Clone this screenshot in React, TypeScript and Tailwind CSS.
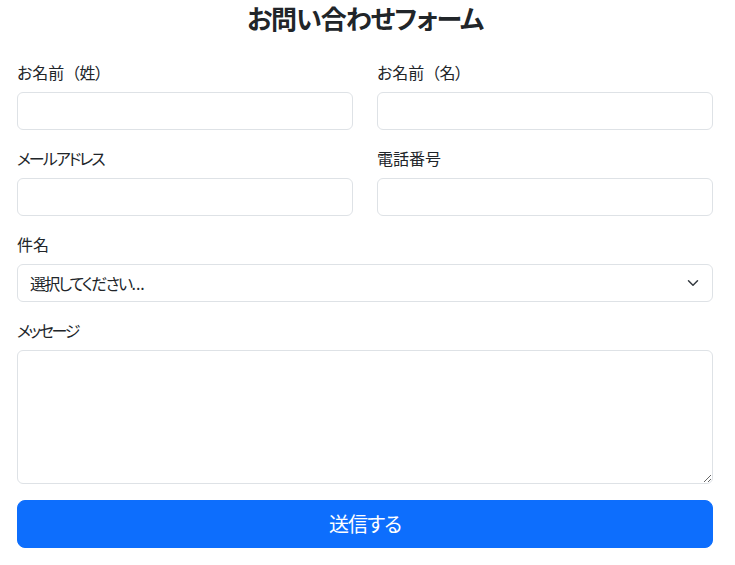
import React from "react";

const font = { fontFamily: '"Noto Sans CJK JP", "Noto Sans", sans-serif' };
const palt = { fontFeatureSettings: '"palt"' };

function Field({ label, children }: { label: React.ReactNode; children: React.ReactNode }) {
  return (
    <div className="mb-4 flex flex-col">
      <label className="mb-2 text-[16px] leading-[24px] text-[#212529]">{label}</label>
      {children}
    </div>
  );
}

function NameLabel({ inner }: { inner: string }) {
  return (
    <span>
      <span style={palt}>お名前</span>
      <span className="tracking-[-1px]">（{inner}）</span>
    </span>
  );
}

const inputCls =
  "block h-[38px] w-full rounded-[6px] border border-[#dee2e6] bg-white px-3 py-1.5 text-[16px] leading-[24px] text-[#212529] outline-none";

export default function App() {
  return (
    <div className="min-h-[565px] w-[735px] bg-white" style={font}>
      <div className="ml-[17px] w-[696px] pt-[2px]">
        <h2
          className="mb-[27px] text-center text-[26px] font-bold leading-[1.2] tracking-[-1px] text-[#212529]"
          style={palt}
        >
          お問い合わせフォーム
        </h2>
        <div className="grid grid-cols-2 gap-x-6">
          <Field label={<NameLabel inner="姓" />}>
            <input className={inputCls} type="text" />
          </Field>
          <Field label={<NameLabel inner="名" />}>
            <input className={inputCls} type="text" />
          </Field>
          <Field
            label={
              <span className="tracking-[-2px]" style={palt}>
                メールアドレス
              </span>
            }
          >
            <input className={inputCls} type="email" />
          </Field>
          <Field label="電話番号">
            <input className={inputCls} type="tel" />
          </Field>
        </div>
        <Field label="件名">
          <div className="relative">
            <div className={inputCls + " pr-10"}>
              <span className="tracking-[-1.8px]" style={palt}>
                選択してください
              </span>
              <span>...</span>
            </div>
            <svg
              className="pointer-events-none absolute right-[12px] top-[13px]"
              width="16"
              height="12"
              viewBox="0 0 16 16"
            >
              <path d="m2 5 6 6 6-6" fill="none" stroke="#343a40" strokeWidth="2" strokeLinecap="round" strokeLinejoin="round" />
            </svg>
          </div>
        </Field>
        <Field
          label={
            <span className="tracking-[-2.4px]" style={palt}>
              メッセージ
            </span>
          }
        >
          <textarea
            rows={5}
            className="block h-[134px] w-full rounded-[6px] border border-[#dee2e6] bg-white px-3 py-1.5 text-[16px] leading-[24px] text-[#212529] outline-none"
            style={font}
          />
        </Field>
        <button
          type="button"
          className="block h-[48px] w-full rounded-[8px] border border-[#0d6efd] bg-[#0d6efd] text-[20px] leading-[30px] tracking-[-1px] text-white"
          style={{ ...font, ...palt }}
        >
          送信する
        </button>
      </div>
    </div>
  );
}
